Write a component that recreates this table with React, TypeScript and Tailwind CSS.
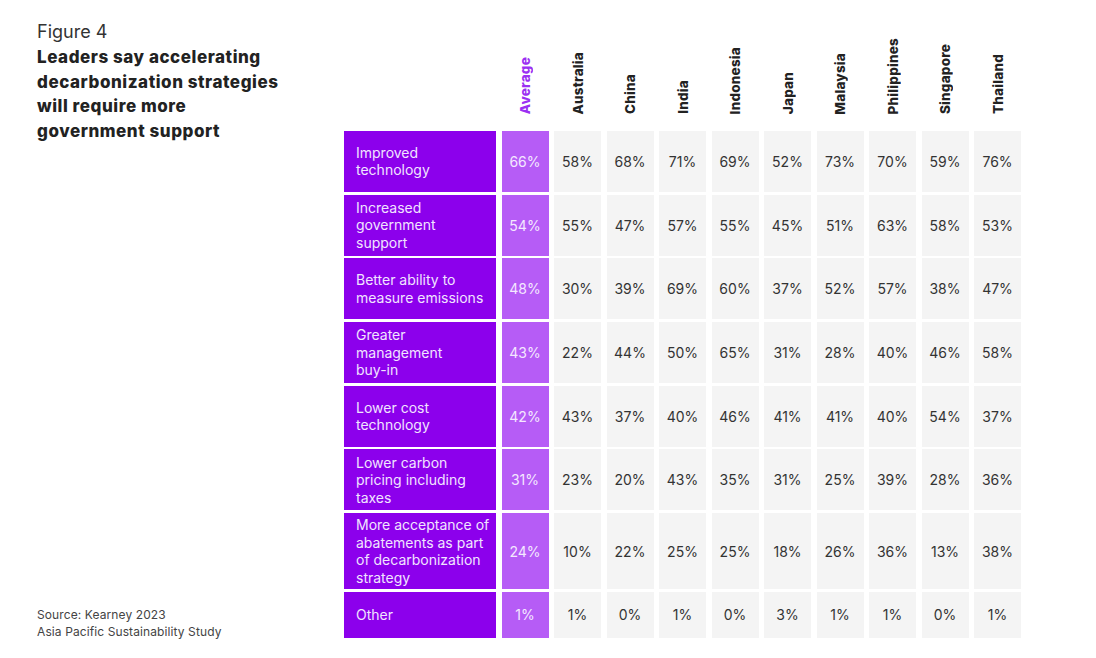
import React from "react";

const cols = ["Average", "Australia", "China", "India", "Indonesia", "Japan", "Malaysia", "Philippines", "Singapore", "Thailand"];

const rows: { label: string[]; vals: string[]; h: string }[] = [
  { label: ["Improved", "technology"], vals: ["66", "58", "68", "71", "69", "52", "73", "70", "59", "76"], h: "h-[61px]" },
  { label: ["Increased", "government", "support"], vals: ["54", "55", "47", "57", "55", "45", "51", "63", "58", "53"], h: "h-[61px]" },
  { label: ["Better ability to", "measure emissions"], vals: ["48", "30", "39", "69", "60", "37", "52", "57", "38", "47"], h: "h-[61px]" },
  { label: ["Greater", "management", "buy-in"], vals: ["43", "22", "44", "50", "65", "31", "28", "40", "46", "58"], h: "h-[61px]" },
  { label: ["Lower cost", "technology"], vals: ["42", "43", "37", "40", "46", "41", "41", "40", "54", "37"], h: "h-[61px]" },
  { label: ["Lower carbon", "pricing including", "taxes"], vals: ["31", "23", "20", "43", "35", "31", "25", "39", "28", "36"], h: "h-[61px]" },
  { label: ["More acceptance of", "abatements as part", "of decarbonization", "strategy"], vals: ["24", "10", "22", "25", "25", "18", "26", "36", "13", "38"], h: "h-[76px]" },
  { label: ["Other"], vals: ["1", "1", "0", "1", "0", "3", "1", "1", "0", "1"], h: "h-[46px]" },
];

export default function App() {
  return (
    <div
      className="w-[1096px] h-[658px] bg-white flex overflow-hidden"
      style={{ fontFamily: "Inter, 'Liberation Sans', sans-serif" }}
    >
      <div className="w-[344px] shrink-0 flex flex-col justify-between pl-[37px] pt-[20px] pb-[18px]">
        <div>
          <div className="text-[18px] leading-[24px] text-[#333]">Figure 4</div>
          <div className="text-[17px] leading-[24.5px] font-extrabold text-[#222] tracking-[0.55px] whitespace-nowrap mt-[1px]">
            Leaders say accelerating
            <br />
            decarbonization strategies
            <br />
            will require more
            <br />
            government support
          </div>
        </div>
        <div className="text-[12px] leading-[17px] text-[#444] tracking-[0.1px]">
          <div>Source: Kearney 2023</div>
          <div>Asia Pacific Sustainability Study</div>
        </div>
      </div>
      <div className="pt-[34px]">
        <div className="grid grid-cols-[152px_repeat(10,47px)] gap-x-[5.5px] gap-y-[2.7px]">
          <div className="h-[94.3px]" />
          {cols.map((c, i) => (
            <div key={c} className="h-[94.3px] flex items-end justify-center pb-[14px]">
              <span
                className={`[writing-mode:vertical-rl] rotate-180 font-extrabold text-[13.5px] leading-[16px] tracking-[0.2px] ${
                  i === 0 ? "text-[#9b30f2]" : "text-[#222]"
                }`}
              >
                {c}
              </span>
            </div>
          ))}
          {rows.map((r) => (
            <React.Fragment key={r.label.join(" ")}>
              <div className={`${r.h} bg-[#8c00ec] flex flex-col justify-center pl-[12px] text-[14px] leading-[17.5px] text-[#f1e4ff] whitespace-nowrap`}>
                {r.label.map((l) => (
                  <div key={l}>{l}</div>
                ))}
              </div>
              {r.vals.map((v, j) => (
                <div
                  key={j}
                  className={`${r.h} flex items-center justify-center text-[14px] ${
                    j === 0 ? "bg-[#b65cf6] text-[#f4e8ff]" : "bg-[#f4f4f4] text-[#333]"
                  }`}
                >
                  {v}%
                </div>
              ))}
            </React.Fragment>
          ))}
        </div>
      </div>
    </div>
  );
}
